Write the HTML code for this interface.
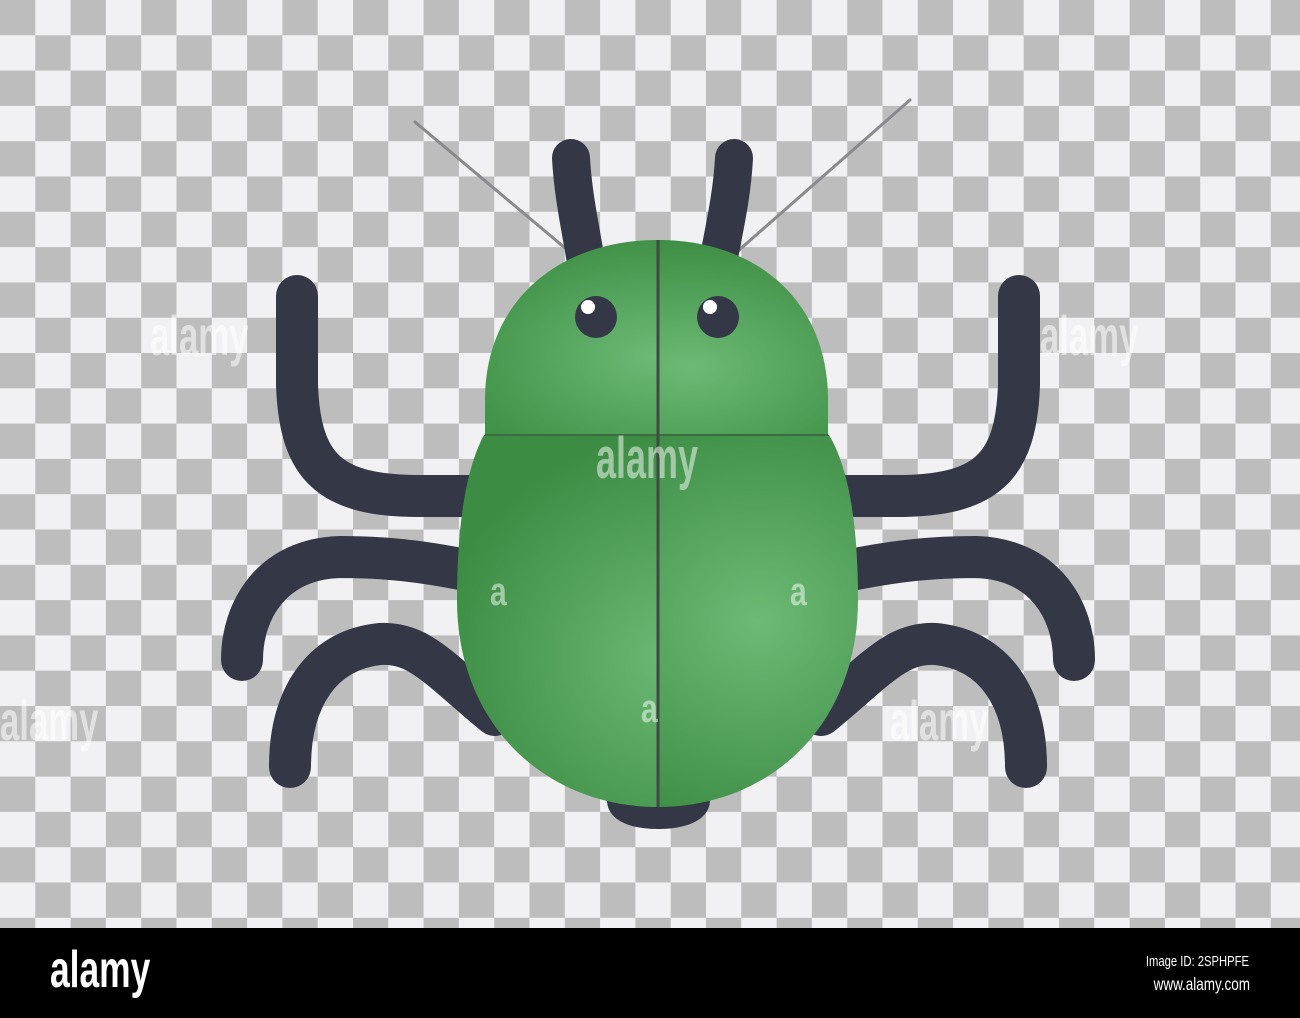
<!DOCTYPE html>
<html><head><meta charset="utf-8"><style>
html,body{margin:0;padding:0;width:1300px;height:1018px;overflow:hidden;background:#000}
svg{display:block}
</style></head><body>
<svg width="1300" height="1018" viewBox="0 0 1300 1018" xmlns="http://www.w3.org/2000/svg">
<defs>
<pattern id="chk" x="0" y="0" width="70.6" height="70.6" patternUnits="userSpaceOnUse">
<rect width="70.6" height="70.6" fill="#f1f1f3"/>
<rect x="0" y="0" width="35.3" height="35.3" fill="#bdbdbe"/>
<rect x="35.3" y="35.3" width="35.3" height="35.3" fill="#bdbdbe"/>
</pattern>
<radialGradient id="gL" cx="0.55" cy="0.6" r="0.6">
<stop offset="0" stop-color="#6cba75"/><stop offset="1" stop-color="#3d8c44"/>
</radialGradient>
<radialGradient id="gR" cx="0.75" cy="0.5" r="0.6">
<stop offset="0" stop-color="#6cba75"/><stop offset="1" stop-color="#3d8c44"/>
</radialGradient>
<radialGradient id="hL" cx="0.5" cy="0.6" r="0.65">
<stop offset="0" stop-color="#6cba75"/><stop offset="1" stop-color="#3e8e45"/>
</radialGradient>
<radialGradient id="hR" cx="0.6" cy="0.65" r="0.65">
<stop offset="0" stop-color="#6cba75"/><stop offset="1" stop-color="#3e8e45"/>
</radialGradient>
<clipPath id="cl"><rect x="0" y="0" width="658" height="1018"/></clipPath>
<clipPath id="cr"><rect x="658" y="0" width="642" height="1018"/></clipPath>
</defs>
<rect x="0" y="0" width="1300" height="928" fill="url(#chk)"/>

<g font-family="Liberation Sans, sans-serif" font-weight="bold" fill="#fff" fill-opacity="0.55" font-size="56">
<text x="150" y="355" transform="translate(150 0) scale(0.62 1) translate(-150 0)">alamy</text>
<text x="1040" y="355" transform="translate(1040 0) scale(0.62 1) translate(-1040 0)">alamy</text>
<text x="0" y="740" transform="scale(0.62 1)">alamy</text>
<text x="890" y="740" transform="translate(890 0) scale(0.62 1) translate(-890 0)">alamy</text>
</g>

<g stroke="#8a8a8e" stroke-width="3" stroke-linecap="round">
<line x1="415" y1="122" x2="577" y2="258"/>
<line x1="910" y1="100" x2="730" y2="258"/>
</g>
<g stroke="#343846" stroke-width="38" stroke-linecap="round" fill="none">
<path d="M571,158 C573,195 580,225 586,262"/>
<path d="M734,158 C732,195 725,225 718,262"/>
</g>
<g stroke="#343846" stroke-width="42" stroke-linecap="round" fill="none">
<path d="M297,296 L297,385 C300,468 330,496 420,496 L490,496"/>
<path d="M480,573 C420,560 380,557 340,557 C272,559 242,610 242,660"/>
<path d="M495,715 C440,670 420,642 380,644 C320,650 290,700 290,767"/>
</g>
<g stroke="#343846" stroke-width="42" stroke-linecap="round" fill="none" transform="translate(1316 0) scale(-1 1)">
<path d="M297,296 L297,385 C300,468 330,496 420,496 L490,496"/>
<path d="M480,573 C420,560 380,557 340,557 C272,559 242,610 242,660"/>
<path d="M495,715 C440,670 420,642 380,644 C320,650 290,700 290,767"/>
</g>

<path d="M607,800 L710,800 C710,818 690,829 658,829 C626,829 607,818 607,800 Z" fill="#343846"/>

<path d="M484,435 L829,435 C850,470 858,530 858,600 C858,725 770,807 658,807 C546,807 457,725 457,600 C457,530 465,470 484,435 Z" fill="url(#gL)" clip-path="url(#cl)"/>
<path d="M484,435 L829,435 C850,470 858,530 858,600 C858,725 770,807 658,807 C546,807 457,725 457,600 C457,530 465,470 484,435 Z" fill="url(#gR)" clip-path="url(#cr)"/>
<path d="M485,435 L485,400 C485,300 560,240 658,240 C756,240 828,300 828,400 L828,435 Z" fill="url(#hL)" clip-path="url(#cl)"/>
<path d="M485,435 L485,400 C485,300 560,240 658,240 C756,240 828,300 828,400 L828,435 Z" fill="url(#hR)" clip-path="url(#cr)"/>
<line x1="485" y1="435" x2="828" y2="435" stroke="#3b6b3f" stroke-width="2"/>
<line x1="658" y1="240" x2="658" y2="807" stroke="#3f4a44" stroke-width="3"/>

<circle cx="596" cy="317" r="21" fill="#343846"/>
<circle cx="588" cy="307" r="7" fill="#fff"/>
<circle cx="718" cy="317" r="21" fill="#343846"/>
<circle cx="710" cy="307" r="7" fill="#fff"/>

<g font-family="Liberation Sans, sans-serif" font-weight="bold" fill="#fff" fill-opacity="0.5">
<text x="596" y="478" font-size="58" transform="translate(596 0) scale(0.62 1) translate(-596 0)">alamy</text>
<text x="490" y="605" font-size="40" transform="translate(490 0) scale(0.75 1) translate(-490 0)">a</text>
<text x="790" y="605" font-size="40" transform="translate(790 0) scale(0.75 1) translate(-790 0)">a</text>
<text x="641" y="722" font-size="40" transform="translate(641 0) scale(0.75 1) translate(-641 0)">a</text>
</g>

<rect x="0" y="928" width="1300" height="90" fill="#000"/>
<text x="50" y="987" font-family="Liberation Sans, sans-serif" font-weight="bold" font-size="52" fill="#fff" transform="translate(50 0) scale(0.68 1) translate(-50 0)">alamy</text>
<text x="1249" y="966" text-anchor="end" font-family="Liberation Sans, sans-serif" font-size="15" fill="#fff" transform="translate(1249 0) scale(0.75 1) translate(-1249 0)">Image ID: 2SPHPFE</text>
<text x="1250" y="990" text-anchor="end" font-family="Liberation Sans, sans-serif" font-size="18" fill="#fff" transform="translate(1250 0) scale(0.75 1) translate(-1250 0)">www.alamy.com</text>
</svg>
</body></html>
